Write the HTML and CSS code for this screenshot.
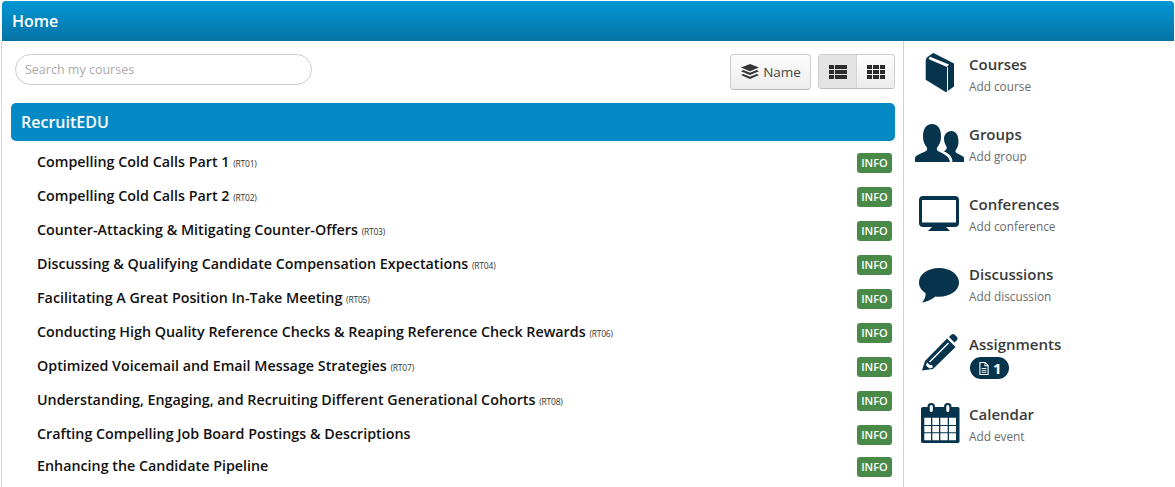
FILE: index.html
```html
<!DOCTYPE html>
<html lang="en">
<head>
    <meta charset="UTF-8">
    <title>Home</title>
    <link rel="stylesheet" href="styles.css">
</head>
<body>
    <div class="page">
        <div class="header">Home</div>
        <div class="content">
            <div class="main">
                <div class="toolbar">
                    <input class="search" type="text" placeholder="Search my courses">
                    <div class="button name-button">
                        <svg class="layers" viewBox="0 0 20 16"><path d="M10 0l9 3.600-9 3.600-9-3.600z"/><path d="M3.200 6l6.800 2.800L16.800 6 19 7.200l-9 3.700-9-3.700z"/><path d="M3.200 9.900l6.800 2.800 6.800-2.800 2.200 1.200-9 3.800-9-3.800z"/></svg>
                        <span>Name</span>
                    </div>
                    <div class="view-group">
                        <div class="view active">
                            <svg viewBox="0 0 18 14"><path d="M0 0h5v4H0zM6 0h12v4H6zM0 5h5v4H0zM6 5h12v4H6zM0 10h5v4H0zM6 10h12v4H6z"/></svg>
                        </div>
                        <div class="view">
                            <svg viewBox="0 0 18 14"><path d="M0 0h5v4H0zM6 0h6v4H6zM13 0h5v4h-5zM0 5h5v4H0zM6 5h6v4H6zM13 5h5v4h-5zM0 10h5v4H0zM6 10h6v4H6zM13 10h5v4h-5z"/></svg>
                        </div>
                    </div>
                </div>
                <div class="group-bar">RecruitEDU</div>
                <ul class="courses">
                    <li class="course"><span class="course-name">Compelling Cold Calls Part 1 <small>(RT01)</small></span><span class="info">INFO</span></li>
                    <li class="course"><span class="course-name">Compelling Cold Calls Part 2 <small>(RT02)</small></span><span class="info">INFO</span></li>
                    <li class="course"><span class="course-name">Counter-Attacking &amp; Mitigating Counter-Offers <small>(RT03)</small></span><span class="info">INFO</span></li>
                    <li class="course"><span class="course-name">Discussing &amp; Qualifying Candidate Compensation Expectations <small>(RT04)</small></span><span class="info">INFO</span></li>
                    <li class="course"><span class="course-name">Facilitating A Great Position In-Take Meeting <small>(RT05)</small></span><span class="info">INFO</span></li>
                    <li class="course"><span class="course-name">Conducting High Quality Reference Checks &amp; Reaping Reference Check Rewards <small>(RT06)</small></span><span class="info">INFO</span></li>
                    <li class="course"><span class="course-name">Optimized Voicemail and Email Message Strategies <small>(RT07)</small></span><span class="info">INFO</span></li>
                    <li class="course"><span class="course-name">Understanding, Engaging, and Recruiting Different Generational Cohorts <small>(RT08)</small></span><span class="info">INFO</span></li>
                    <li class="course"><span class="course-name">Crafting Compelling Job Board Postings &amp; Descriptions</span><span class="info">INFO</span></li>
                    <li class="course last"><span class="course-name">Enhancing the Candidate Pipeline</span><span class="info">INFO</span></li>
                </ul>
            </div>
            <div class="sidebar">
                <div class="side-item">
                    <div class="side-icon">
                        <svg viewBox="0 0 50 40"><path d="M11.700 8c0-2.500 1.500-4 3.500-5.200L18 .8c1-.6 2-.6 3 0L40 10.500v23L32 39.300 11.700 26.700z"/><path d="M16 3.700l19 7.800-2 2.500L14.500 6z" fill="#fff"/><path d="M33 14.500l1-.5v23.500l-1 .5z" fill="#fff"/></svg>
                    </div>
                    <div class="side-text"><div class="side-title">Courses</div><div class="side-sub">Add course</div></div>
                </div>
                <div class="side-item">
                    <div class="side-icon">
                        <svg viewBox="0 0 50 40"><path d="M1 39v-4c0-3 8-5 11-7 1.500-1 1.500-2.500.5-4-2-2.500-3.500-6-3.500-10.500C9 6 12 1 18 1s9 5 9 12.500c0 4.500-1.500 8-3.500 10.500-1 1.500-1 3 .5 4 3 2 11 4 12 11z"/><path d="M30 15.500c0 3 1 5.500 2.200 7.500.8 1.500.6 2.700 0 3.400-.5.600-1.500 1.200-2.600 1.800 3.500 1.500 7.400 3.800 8.400 7.800.3 1 .4 2 .4 3H50v-4c0-2-5.500-3.500-8-5.500-.8-.8-.6-2 .2-3 1.300-1.800 2.300-4.500 2.300-8C44.500 11.500 41.500 8 37.500 8S30 11.500 30 15.500z"/></svg>
                    </div>
                    <div class="side-text"><div class="side-title">Groups</div><div class="side-sub">Add group</div></div>
                </div>
                <div class="side-item">
                    <div class="side-icon">
                        <svg viewBox="0 0 50 40"><path d="M9 3h32c2.500 0 4 1.500 4 4v23c0 2.500-1.500 4-4 4h-9l4 4H14l4-4H9c-2.500 0-4-1.500-4-4V7c0-2.500 1.500-4 4-4zm-1 4v22.500h34V7z" fill-rule="evenodd"/></svg>
                    </div>
                    <div class="side-text"><div class="side-title">Conferences</div><div class="side-sub">Add conference</div></div>
                </div>
                <div class="side-item">
                    <div class="side-icon">
                        <svg viewBox="0 0 50 40"><path d="M25 5C13.500 5 5 11.500 5 19.500c0 4.500 2.500 8 6.500 10.500.5 3.500-1 6.500-3.500 9.500 4.500-.3 9.500-3 13.500-6 1 .2 2.300.2 3.500.2 11.500 0 20-6.300 20-14.200S36.500 5 25 5z"/></svg>
                    </div>
                    <div class="side-text"><div class="side-title">Discussions</div><div class="side-sub">Add discussion</div></div>
                </div>
                <div class="side-item">
                    <div class="side-icon">
                        <svg viewBox="0 0 50 40"><path d="M8 37.500l3-9.500L33 5.500l8.500 8.500L19 36zm5-8l-1 3 3.500 3 3.500-1-1-2.500L16 32zm2-1l1 1 19-19-1-1z" fill-rule="evenodd"/><path d="M35 4l2.500-2.500c1-.7 2-.7 3 0L43 4c.7 1 .7 2 0 3l-2.500 2.500z"/></svg>
                    </div>
                    <div class="side-text">
                        <div class="side-title">Assignments</div>
                        <div class="pill">
                            <svg viewBox="0 0 12 14"><path d="M1 0h6.500L11 3.500V14H1zm1.200 1.200v11.600h7.600V4.500H6.500V1.200zM7.500 1.500v2h2zM3.500 6.500h5v1h-5zM3.500 8.500h5v1h-5zM3.500 10.500h5v1h-5z" fill-rule="evenodd"/></svg>
                            <span>1</span>
                        </div>
                    </div>
                </div>
                <div class="side-item">
                    <div class="side-icon">
                        <svg viewBox="0 0 50 40"><path d="M9 4h35c1 0 1.500 1 1.500 2v32c0 1-.5 2-1.500 2H9c-1.500 0-2-1-2-2V6c0-1 .5-2 2-2zM10.300 14.700V22H17v-7.300zm8 0V22H25v-7.300zm8 0V22h7.400v-7.300zm8.700 0V22h7v-7.300zM10.300 23v6.300H17V23zm8 0v6.300H25V23zm8 0v6.300h7.400V23zm8.700 0v6.300h7V23zm-24.700 7.300v7H17v-7zm8 0v7H25v-7zm8 0v7h7.400v-7zm8.700 0v7h7v-7z" fill-rule="evenodd"/><rect x="13.500" y="0" width="7.500" height="11" rx="3.700"/><rect x="30" y="0" width="7.500" height="11" rx="3.700"/><rect x="15.800" y="2" width="3" height="7" rx="1.500" fill="#fff"/><rect x="32.300" y="2" width="3" height="7" rx="1.500" fill="#fff"/></svg>
                    </div>
                    <div class="side-text"><div class="side-title">Calendar</div><div class="side-sub">Add event</div></div>
                </div>
            </div>
        </div>
    </div>
</body>
</html>
```

FILE: styles.css
```css
html, body {
    margin: 0;
    padding: 0;
    height: 100%;
}
body {
    font-family: "Open Sans", sans-serif;
    background-color: #fff;
    overflow: hidden;
}
.page {
    margin: 1px 1px 0 1px;
}
.header {
    height: 40px;
    line-height: 40px;
    margin-left: 1px;
    padding-left: 10px;
    font-size: 16px;
    font-weight: 600;
    color: #fff;
    background: linear-gradient(to bottom, #0397d6, #0672a4);
    border-radius: 4px 4px 0 0;
}
.content {
    display: flex;
    height: 446px;
    border-left: 1px solid #d8d8d8;
}
.main {
    width: 902px;
    flex: none;
    box-sizing: border-box;
    padding: 13px 8px 0 9px;
    border-right: 1px solid #d0d0d0;
}
.toolbar {
    display: flex;
    align-items: flex-start;
    height: 49px;
}
.search {
    width: 297px;
    height: 31px;
    box-sizing: border-box;
    margin-left: 4px;
    padding: 0 9px;
    border: 1px solid #ccc;
    border-radius: 16px;
    font-family: inherit;
    font-size: 12.5px;
    outline: none;
}
.search::placeholder {
    color: #aaa;
    opacity: 1;
}
.button {
    display: flex;
    align-items: center;
}
.name-button {
    margin-left: auto;
    width: 81px;
    height: 36px;
    box-sizing: border-box;
    justify-content: center;
    gap: 3px;
    border: 1px solid #ccc;
    border-bottom-color: #bbb;
    border-radius: 4px;
    background: linear-gradient(to bottom, #fdfdfd, #ececec);
    font-size: 13.5px;
    color: #444;
}
.layers {
    width: 20px;
    height: 16px;
    fill: #333;
}
.view-group {
    display: flex;
    margin-left: 7px;
    height: 35px;
    box-sizing: border-box;
    border: 1px solid #ccc;
    border-bottom-color: #bbb;
    border-radius: 4px;
    overflow: hidden;
}
.view {
    width: 37px;
    display: flex;
    align-items: center;
    justify-content: center;
    background: linear-gradient(to bottom, #fdfdfd, #ececec);
}
.view.active {
    background: #e4e4e4;
    border-right: 1px solid #d4d4d4;
}
.view svg {
    width: 18px;
    height: 14px;
    fill: #2b2b2b;
}
.group-bar {
    height: 38px;
    line-height: 38px;
    padding-left: 10px;
    font-size: 16px;
    font-weight: 600;
    color: #fff;
    background-color: #0589c4;
    border-radius: 5px;
}
.courses {
    list-style: none;
    margin: 0;
    padding: 5px 3px 0 26px;
}
.course {
    display: flex;
    align-items: center;
    justify-content: space-between;
    height: 34px;
}
.course.last {
    height: 30px;
}
.course-name {
    margin-bottom: 4px;
    font-size: 14.3px;
    font-weight: 600;
    color: #111;
}
.course-name small {
    font-size: 8.5px;
    font-weight: 400;
    letter-spacing: -0.2px;
    color: #333;
}
.info {
    width: 35px;
    height: 20px;
    line-height: 20px;
    text-align: center;
    font-size: 11px;
    font-weight: 600;
    color: #fff;
    background-color: #4a8a49;
    border-radius: 3px;
}
.sidebar {
    flex: 1;
    padding-top: 13px;
}
.side-item {
    display: flex;
    height: 70px;
}
.side-icon {
    width: 50px;
    margin-left: 10px;
    margin-top: -1px;
}
.side-icon svg {
    display: block;
    width: 50px;
    height: 40px;
    fill: #07344d;
}
.side-text {
    margin-left: 5px;
}
.side-title {
    font-size: 15px;
    font-weight: 600;
    line-height: 20px;
    color: #3a3a3a;
}
.side-sub {
    font-size: 11.8px;
    line-height: 22px;
    margin-top: 1px;
    color: #6b6b6b;
}
.pill {
    display: inline-flex;
    align-items: center;
    gap: 3px;
    width: 39px;
    height: 22px;
    box-sizing: border-box;
    padding-left: 8px;
    margin-top: 3px;
    margin-left: 1px;
    border-radius: 11px;
    background-color: #07344d;
    color: #fff;
    font-size: 15px;
    font-weight: 700;
}
.pill svg {
    width: 12px;
    height: 13px;
    fill: #fff;
}
```
